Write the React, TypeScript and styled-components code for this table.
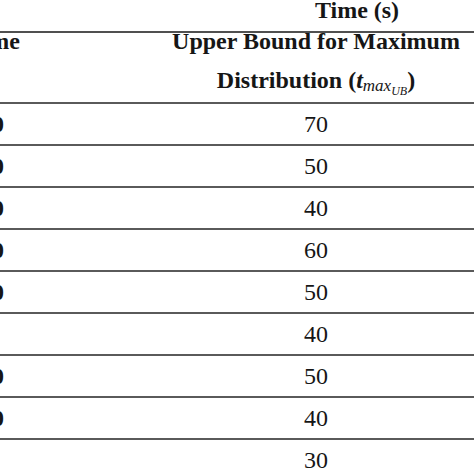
import styled, { createGlobalStyle } from "styled-components";

const rows = [
  { name: "20.0", upper: 70 },
  { name: "30.0", upper: 50 },
  { name: "10.0", upper: 40 },
  { name: "40.0", upper: 60 },
  { name: "20.0", upper: 50 },
  { name: "5.0", upper: 40 },
  { name: "30.0", upper: 50 },
  { name: "20.0", upper: 40 },
  { name: "5.0", upper: 30 },
];

const App = () => {
  return (
    <>
      <GlobalStyle />
      <StFrame>
        <StTable>
          <colgroup>
            <col style={{ width: 220 }} />
            <col style={{ width: 312 }} />
            <col style={{ width: 82 }} />
          </colgroup>
          <thead>
            <tr>
              <StGroupCell />
              <StGroupCell colSpan={2}>Time (s)</StGroupCell>
            </tr>
            <tr>
              <StHeadCell align="left">
                <StFirstLine>Name</StFirstLine>
              </StHeadCell>
              <StHeadCell align="center">
                <StFirstLine>Upper Bound for Maximum</StFirstLine>
                <StSecondLine>
                  Distribution (<StVar>t</StVar>
                  <StSub>
                    max<StSubSub>UB</StSubSub>
                  </StSub>
                  )
                </StSecondLine>
              </StHeadCell>
              <StHeadCell align="center" />
            </tr>
          </thead>
          <tbody>
            {rows.map((row, i) => (
              <tr key={i}>
                <StCell bold align="left">
                  {row.name}
                </StCell>
                <StCell align="center">{row.upper}</StCell>
                <StCell align="center" />
              </tr>
            ))}
          </tbody>
        </StTable>
      </StFrame>
    </>
  );
};

export default App;

const GlobalStyle = createGlobalStyle`
  html, body {
    margin: 0;
    padding: 0;
    background: #ffffff;
  }
  body {
    overflow: hidden;
  }
`;

const StFrame = styled.div`
  width: 474px;
  height: 474px;
  overflow: hidden;
  background: #ffffff;
  font-family: "Liberation Serif", "Times New Roman", serif;
  color: #161616;
`;

const StTable = styled.table`
  border-collapse: separate;
  border-spacing: 0;
  table-layout: fixed;
  width: 614px;
  margin-left: -60px;
`;

const StGroupCell = styled.th`
  padding: 0 0 11px;
  line-height: 20px;
  font-size: 24px;
  font-weight: 700;
  text-align: center;
  vertical-align: top;
  border-bottom: 2px solid #505050;
`;

const StHeadCell = styled.th<{ align: "left" | "center" }>`
  padding: 0 0 10px ${({ align }) => (align === "left" ? "20px" : "0")};
  font-size: 24px;
  font-weight: 700;
  text-align: ${({ align }) => align};
  vertical-align: top;
  white-space: nowrap;
  border-bottom: 2px solid #5a5a5a;
`;

const StFirstLine = styled.div`
  line-height: 16px;
`;

const StSecondLine = styled.div`
  margin-top: 19px;
  line-height: 24px;
`;

const StVar = styled.i`
  font-weight: 700;
`;

const StSub = styled.sub`
  font-size: 17px;
  font-style: italic;
  font-weight: 400;
  line-height: 0;
  vertical-align: -3px;
`;

const StSubSub = styled.sub`
  font-size: 12px;
  line-height: 0;
  vertical-align: -4px;
`;

const StCell = styled.td<{ align: "left" | "center"; bold?: boolean }>`
  padding: 8px 0 8px ${({ align }) => (align === "left" ? "22px" : "0")};
  line-height: 24px;
  font-size: 24px;
  font-weight: ${({ bold }) => (bold ? 700 : 400)};
  text-align: ${({ align }) => align};
  border-bottom: 2px solid #5a5a5a;
`;
